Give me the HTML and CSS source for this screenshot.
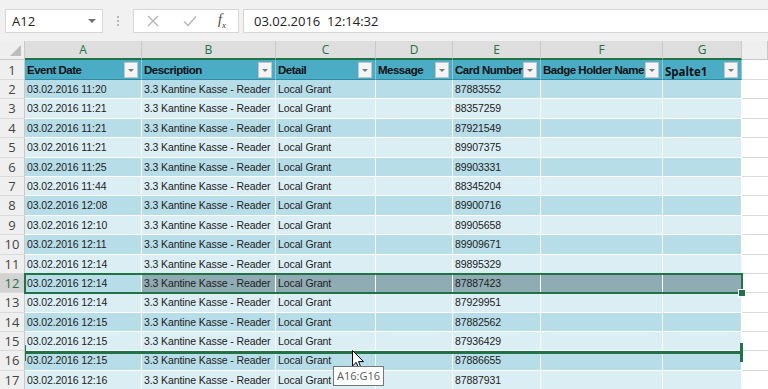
FILE: index.html
```html
<!DOCTYPE html>
<html lang="de">
<head>
<meta charset="UTF-8">
<title>Mappe1 - Excel</title>
<link rel="stylesheet" href="styles.css">
</head>
<body>

<!-- formula bar -->
<div class="topbar">
  <div class="namebox"><span>A12</span><i class="caret"></i></div>
  <div class="grip"><b></b><b></b><b></b></div>
  <div class="fxbtns">
    <svg class="ico" width="14" height="14" viewBox="0 0 14 14"><path d="M2 2L12 12M12 2L2 12" stroke="#b4b4b4" stroke-width="1.3" fill="none"/></svg>
    <svg class="ico" width="16" height="14" viewBox="0 0 16 14"><path d="M2 7.5L6 11.5L14 2.5" stroke="#b4b4b4" stroke-width="1.3" fill="none"/></svg>
    <span class="fx">f<sub>x</sub></span>
  </div>
  <div class="formula">03.02.2016&nbsp; 12:14:32</div>
</div>

<!-- sheet -->
<div class="sheet">
  <div class="row colheads">
    <div class="corner"><i></i></div>
    <div class="ch on">A</div><div class="ch on">B</div><div class="ch on">C</div><div class="ch on">D</div>
    <div class="ch on">E</div><div class="ch on">F</div><div class="ch on">G</div><div class="ch"></div>
  </div>

  <div class="row thead">
    <div class="rh">1</div>
    <div class="th"><span>Event Date</span><i class="dd"></i></div>
    <div class="th"><span>Description</span><i class="dd"></i></div>
    <div class="th"><span>Detail</span><i class="dd"></i></div>
    <div class="th"><span>Message</span><i class="dd"></i></div>
    <div class="th"><span>Card Number</span><i class="dd"></i></div>
    <div class="th"><span>Badge Holder Name</span><i class="dd"></i></div>
    <div class="th alt"><span>Spalte1</span><i class="dd"></i></div>
    <div class="blank"></div>
  </div>

  <div class="row dark"><div class="rh">2</div><div class="c">03.02.2016 11:20</div><div class="c">3.3 Kantine Kasse - Reader</div><div class="c">Local Grant</div><div class="c"></div><div class="c">87883552</div><div class="c"></div><div class="c"></div><div class="blank"></div></div>
  <div class="row light"><div class="rh">3</div><div class="c">03.02.2016 11:21</div><div class="c">3.3 Kantine Kasse - Reader</div><div class="c">Local Grant</div><div class="c"></div><div class="c">88357259</div><div class="c"></div><div class="c"></div><div class="blank"></div></div>
  <div class="row dark"><div class="rh">4</div><div class="c">03.02.2016 11:21</div><div class="c">3.3 Kantine Kasse - Reader</div><div class="c">Local Grant</div><div class="c"></div><div class="c">87921549</div><div class="c"></div><div class="c"></div><div class="blank"></div></div>
  <div class="row light"><div class="rh">5</div><div class="c">03.02.2016 11:21</div><div class="c">3.3 Kantine Kasse - Reader</div><div class="c">Local Grant</div><div class="c"></div><div class="c">89907375</div><div class="c"></div><div class="c"></div><div class="blank"></div></div>
  <div class="row dark"><div class="rh">6</div><div class="c">03.02.2016 11:25</div><div class="c">3.3 Kantine Kasse - Reader</div><div class="c">Local Grant</div><div class="c"></div><div class="c">89903331</div><div class="c"></div><div class="c"></div><div class="blank"></div></div>
  <div class="row light"><div class="rh">7</div><div class="c">03.02.2016 11:44</div><div class="c">3.3 Kantine Kasse - Reader</div><div class="c">Local Grant</div><div class="c"></div><div class="c">88345204</div><div class="c"></div><div class="c"></div><div class="blank"></div></div>
  <div class="row dark"><div class="rh">8</div><div class="c">03.02.2016 12:08</div><div class="c">3.3 Kantine Kasse - Reader</div><div class="c">Local Grant</div><div class="c"></div><div class="c">89900716</div><div class="c"></div><div class="c"></div><div class="blank"></div></div>
  <div class="row light"><div class="rh">9</div><div class="c">03.02.2016 12:10</div><div class="c">3.3 Kantine Kasse - Reader</div><div class="c">Local Grant</div><div class="c"></div><div class="c">89905658</div><div class="c"></div><div class="c"></div><div class="blank"></div></div>
  <div class="row dark"><div class="rh">10</div><div class="c">03.02.2016 12:11</div><div class="c">3.3 Kantine Kasse - Reader</div><div class="c">Local Grant</div><div class="c"></div><div class="c">89909671</div><div class="c"></div><div class="c"></div><div class="blank"></div></div>
  <div class="row light"><div class="rh">11</div><div class="c">03.02.2016 12:14</div><div class="c">3.3 Kantine Kasse - Reader</div><div class="c">Local Grant</div><div class="c"></div><div class="c">89895329</div><div class="c"></div><div class="c"></div><div class="blank"></div></div>
  <div class="row dark sel"><div class="rh">12</div><div class="c">03.02.2016 12:14</div><div class="c">3.3 Kantine Kasse - Reader</div><div class="c">Local Grant</div><div class="c"></div><div class="c">87887423</div><div class="c"></div><div class="c"></div><div class="blank"></div></div>
  <div class="row light"><div class="rh">13</div><div class="c">03.02.2016 12:14</div><div class="c">3.3 Kantine Kasse - Reader</div><div class="c">Local Grant</div><div class="c"></div><div class="c">87929951</div><div class="c"></div><div class="c"></div><div class="blank"></div></div>
  <div class="row dark"><div class="rh">14</div><div class="c">03.02.2016 12:15</div><div class="c">3.3 Kantine Kasse - Reader</div><div class="c">Local Grant</div><div class="c"></div><div class="c">87882562</div><div class="c"></div><div class="c"></div><div class="blank"></div></div>
  <div class="row light"><div class="rh">15</div><div class="c">03.02.2016 12:15</div><div class="c">3.3 Kantine Kasse - Reader</div><div class="c">Local Grant</div><div class="c"></div><div class="c">87936429</div><div class="c"></div><div class="c"></div><div class="blank"></div></div>
  <div class="row dark"><div class="rh">16</div><div class="c">03.02.2016 12:15</div><div class="c">3.3 Kantine Kasse - Reader</div><div class="c">Local Grant</div><div class="c"></div><div class="c">87886655</div><div class="c"></div><div class="c"></div><div class="blank"></div></div>
  <div class="row light"><div class="rh">17</div><div class="c">03.02.2016 12:16</div><div class="c">3.3 Kantine Kasse - Reader</div><div class="c">Local Grant</div><div class="c"></div><div class="c">87887931</div><div class="c"></div><div class="c"></div><div class="blank"></div></div>
</div>

<!-- selection + drag feedback, drawn over the grid -->
<div class="selbox"><i class="handle"></i></div>
<div class="dropline"></div>
<div class="droptick"></div>
<div class="dropleft"></div>
<svg class="cursor" width="13" height="20" viewBox="0 0 13 20"><path d="M0.5 0.5L0.5 16L4.2 12.4L6.8 18.5L9 17.5L6.5 11.6L11.5 11.6Z" fill="#fff" stroke="#000" stroke-width="1"/></svg>
<div class="tip">A16:G16</div>

</body>
</html>
```

FILE: styles.css
```css
body{margin:0;background:#fff;font-family:"Liberation Sans",Arial,sans-serif;position:relative;height:389px;overflow:hidden}

/* formula bar */
.topbar{height:41px;background:#f1f1f1;display:flex;align-items:center;padding:0 0 0 5px;box-sizing:border-box}
.namebox{width:98px;height:24px;background:#fff;border:1px solid #d6d6d6;box-sizing:border-box;display:flex;align-items:center;justify-content:space-between;padding:0 6px 0 6px;font:13px "Open Sans",sans-serif;color:#222}
.caret{width:0;height:0;border-left:4px solid transparent;border-right:4px solid transparent;border-top:4px solid #707070}
.grip{width:30px;display:flex;flex-direction:column;align-items:center;gap:2px}
.grip b{width:2px;height:2px;background:#b8b8b8}
.fxbtns{width:106px;height:24px;background:#fff;border:1px solid #d6d6d6;box-sizing:border-box;display:flex;align-items:center;padding:0 0 0 12px;gap:22px}
.fx{font:italic 14px "Liberation Serif",serif;color:#444;margin-left:-2px}
.fx sub{font-size:9px}
.formula{flex:1;margin-left:4px;height:24px;background:#fff;border:1px solid #d6d6d6;border-right:none;box-sizing:border-box;padding-left:10px;display:flex;align-items:center;font:13px "Open Sans",sans-serif;color:#222}

/* grid */
.row{display:grid;grid-template-columns:25px 117px 134px 100px 77px 88px 122px 79px 1fr;height:19.4px}
.row > div{box-sizing:border-box;overflow:hidden;white-space:nowrap}
.colheads{height:19px}
.corner{background:#efefef;border-right:1px solid #c9c9c9;border-bottom:1px solid #c9c9c9;position:relative}
.corner i{position:absolute;right:3px;bottom:3px;width:0;height:0;border-left:11px solid transparent;border-bottom:11px solid #bdbdbd}
.ch{background:#efefef;border-right:1px solid #c9c9c9;border-bottom:1px solid #c9c9c9;text-align:center;font:12px/18px "Open Sans",sans-serif;color:#444}
.ch.on{background:#dedede;color:#217346;border-bottom:2px solid #217346;line-height:17px}

.rh{background:#efefef;border-right:1px solid #c9c9c9;border-bottom:1px solid #dadada;text-align:center;font:13px/19px "Open Sans",sans-serif;color:#444}
.sel .rh{background:#d3d3d3;color:#217346}

.thead{height:20px}
.thead .rh{line-height:20px}
.th{background:#4bacc6;border-right:1px solid #8ccadb;border-bottom:1px solid #2f8aa3;display:flex;align-items:center;justify-content:space-between;padding:0 3px 0 2px;font:bold 11.5px "Liberation Sans",sans-serif;letter-spacing:-0.5px;color:#111}
.th.alt span{font:bold 11.5px "Open Sans",sans-serif;letter-spacing:0;padding-top:3px}
.dd{width:14px;height:16px;flex:none;box-sizing:border-box;background:#f4f4f4;border:1px solid #c4c4c4;position:relative}
.dd:after{content:"";position:absolute;left:3px;top:6px;border-left:3.5px solid transparent;border-right:3.5px solid transparent;border-top:3.5px solid #7a7a7a}

.c{border-right:1px solid #fff;border-bottom:1px solid #fff;padding-left:2px;font-size:10.5px;letter-spacing:-0.1px;line-height:19px;color:#222}
.dark .c{background:#b7dde8}
.light .c{background:#dbeef4}
.sel .c{background:#8fabb3}
.sel .c:nth-child(2){background:#b7dde8}
.blank{background:#fff;border-bottom:1px solid #dadada}

/* overlays */
.selbox{position:absolute;left:24px;top:273px;width:719px;height:21px;border:2px solid #217346;box-sizing:border-box}
.handle{position:absolute;right:-5px;bottom:-5px;width:6px;height:6px;background:#217346;border:1px solid #fff}
.dropline{position:absolute;left:25px;top:351px;width:718px;height:3px;background:#217346}
.droptick{position:absolute;left:740px;top:343px;width:3px;height:19px;background:#217346}
.dropleft{position:absolute;left:25px;top:345px;width:1px;height:16px;background:#217346}
.cursor{position:absolute;left:352px;top:350px}
.tip{position:absolute;left:333px;top:366px;padding:2px 3px;background:#fff;border:1px solid #767676;font:11px "Open Sans",sans-serif;color:#575757;line-height:14px}
```
